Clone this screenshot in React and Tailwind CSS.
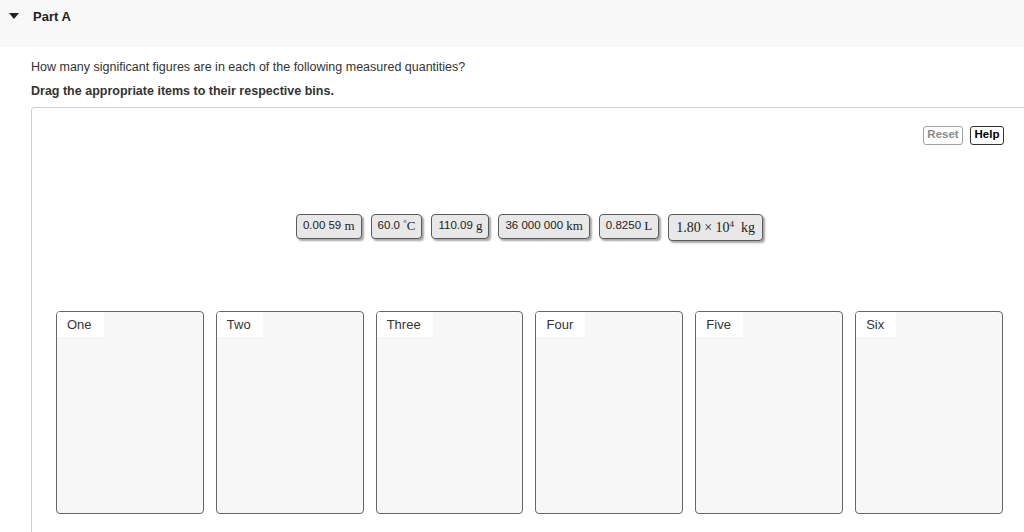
import React from "react";

const serif = { fontFamily: '"Liberation Serif", "DejaVu Serif", serif' };

function Item({ children, className = "" }) {
  return (
    <div
      className={
        "flex items-center h-[25px] px-[6px] border border-[#5a5a5a] rounded-[4px] bg-[#e8e8e8] shadow-[2px_2px_2px_rgba(0,0,0,0.35)] text-[11.5px] text-[#222] whitespace-nowrap " +
        className
      }
    >
      {children}
    </div>
  );
}

function Bin({ label }) {
  return (
    <div className="w-[148px] h-[203px] border-[1.5px] border-[#666] rounded-[4px] bg-[#f7f7f7]">
      <div className="inline-block bg-white text-[13px] text-[#333] pl-[10px] pr-[12px] pt-[3px] pb-[3px] rounded-tl-[3px]">
        {label}
      </div>
    </div>
  );
}

export default function App() {
  const bins = ["One", "Two", "Three", "Four", "Five", "Six"];

  return (
    <div
      className="w-[1024px] h-[532px] overflow-hidden bg-white text-[#222]"
      style={{ fontFamily: '"Liberation Sans", Arial, sans-serif' }}
    >
      {/* header */}
      <div className="h-[47px] bg-[#f8f8f8] flex items-start pt-[7px]">
        <svg width="10" height="7" viewBox="0 0 10 7" className="ml-[9px] mt-[6px]">
          <path d="M0 0 L10 0 L5 6 Z" fill="#222" />
        </svg>
        <span className="ml-[14px] text-[13px] font-bold">Part A</span>
      </div>

      <div className="pl-[31px]">
        <p className="mt-[11px] text-[12.5px] text-[#333]">
          How many significant figures are in each of the following measured quantities?
        </p>
        <p className="mt-[5px] text-[12.5px] font-bold text-[#333]">
          Drag the appropriate items to their respective bins.
        </p>

        <div className="mt-[6px] w-[1010px] h-[440px] border border-[#cfcfcf] rounded-tl-[3px]">
          <div className="w-[972px] flex justify-end gap-[7px] pt-[18px]">
            <button className="h-[19px] w-[40px] border border-[#a0a0a0] rounded-[3px] text-[11.5px] font-bold text-[#8a8a8a] leading-none">
              Reset
            </button>
            <button className="h-[19px] w-[34px] border border-[#333] rounded-[3px] text-[11.5px] font-bold text-black leading-none">
              Help
            </button>
          </div>

          <div className="ml-[24px] w-[947px]">
            <div className="flex justify-center gap-[9px] mt-[69px]">
              <Item>
                0.00 59&nbsp;<span style={serif} className="text-[13px]">m</span>
              </Item>
              <Item>
                60.0&nbsp;<span style={serif} className="text-[13px]">
                  <sup className="text-[9px]">°</sup>C
                </span>
              </Item>
              <Item>
                110.09&nbsp;<span style={serif} className="text-[13px]">g</span>
              </Item>
              <Item>
                36 000 000&nbsp;<span style={serif} className="text-[13px]">km</span>
              </Item>
              <Item>
                0.8250&nbsp;<span style={serif} className="text-[13px]">L</span>
              </Item>
              <Item className="h-[27px] px-[7px]">
                <span style={serif} className="text-[14px]">
                  1.80 × 10<sup className="text-[9px]">4</sup>&nbsp;&nbsp;kg
                </span>
              </Item>
            </div>

            <div className="flex gap-[12px] mt-[70px]">
              {bins.map((b) => (
                <Bin key={b} label={b} />
              ))}
            </div>
          </div>
        </div>
      </div>
    </div>
  );
}
